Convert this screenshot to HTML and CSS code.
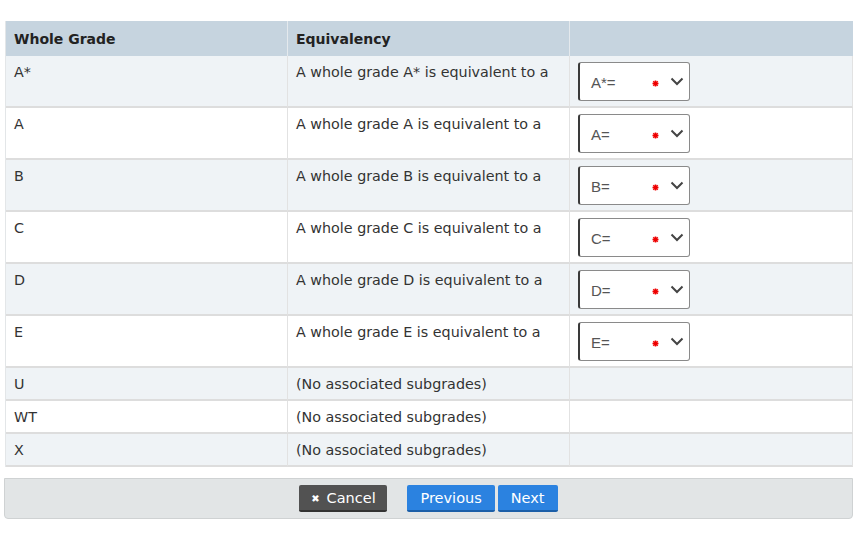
FILE: index.html
```html
<!DOCTYPE html>
<html lang="en">

<head>
    <title>Grade Equivalency</title>
    <link rel="stylesheet" href="styles.css">
</head>

<body>
    <table class="grades">
        <thead>
            <tr>
                <th class="col-grade">Whole Grade</th>
                <th class="col-text">Equivalency</th>
                <th class="col-select"></th>
            </tr>
        </thead>
        <tbody id="grade-rows"></tbody>
    </table>

    <div class="footer">
        <button class="btn btn-cancel"><span class="x-mark">&#10006;</span>Cancel</button>
        <span class="spacer"></span>
        <button class="btn btn-blue">Previous</button>
        <button class="btn btn-blue">Next</button>
    </div>

    <script>
        const grades = ["A*", "A", "B", "C", "D", "E", "U", "WT", "X"];
        const withSubgrades = ["A*", "A", "B", "C", "D", "E"];
        const body = document.getElementById("grade-rows");

        const chevron = '<svg class="chevron" width="14" height="9" viewBox="0 0 14 9"><polyline points="1.5,1.5 7,7 12.5,1.5" fill="none" stroke="#444" stroke-width="2"/></svg>';
        const star = '<svg class="required" width="7" height="7" viewBox="0 0 7 7"><g stroke="#e00" stroke-width="1.6"><line x1="3.5" y1="0.5" x2="3.5" y2="6.5"/><line x1="0.5" y1="3.5" x2="6.5" y2="3.5"/><line x1="1.3" y1="1.3" x2="5.7" y2="5.7"/><line x1="5.7" y1="1.3" x2="1.3" y2="5.7"/></g></svg>';

        grades.forEach((grade) => {
            const row = document.createElement("tr");
            if (withSubgrades.includes(grade)) {
                row.className = "has-select";
                row.innerHTML =
                    `<td>${grade}</td>` +
                    `<td>A whole grade ${grade} is equivalent to a</td>` +
                    `<td class="select-cell"><div class="fake-select"><span class="value">${grade}=</span>${star}${chevron}</div></td>`;
            } else {
                row.innerHTML =
                    `<td>${grade}</td>` +
                    `<td>(No associated subgrades)</td>` +
                    `<td></td>`;
            }
            body.appendChild(row);
        });
    </script>
</body>

</html>
```

FILE: styles.css
```css
body {
    margin: 0;
    padding: 21px 5px 0 5px;
    font-family: "DejaVu Sans", Verdana, sans-serif;
    font-size: 14.3px;
    color: #333;
    background-color: #fff;
}

.grades {
    width: 848px;
    border-collapse: separate;
    border-spacing: 0;
    border-left: 1px solid #e3e6e8;
}

.grades th {
    background-color: #c6d4df;
    color: #222;
    text-align: left;
    font-weight: bold;
    font-size: 14px;
    padding: 9px 8px 7px 8px;
    line-height: 19px;
    border-right: 1px solid #e4e9ed;
}

.grades th:last-child {
    border-right: none;
}

.col-grade {
    width: 265px;
}

.col-text {
    width: 265px;
}

.grades td {
    vertical-align: top;
    padding: 8px 8px 7px 8px;
    line-height: 16px;
    border-bottom: 2px solid #dddddd;
    border-right: 1px solid #e2e2e2;
    color: #333;
}

.grades tbody tr:nth-child(odd) td {
    background-color: #eff3f6;
}

.grades tbody tr:nth-child(even) td {
    background-color: #fff;
}

.grades td.select-cell {
    padding: 6px 8px 5px 8px;
}

.fake-select {
    width: 109px;
    height: 37px;
    border: 1px solid #8a8a8a;
    border-left: 2px solid #3a3a3a;
    border-radius: 3px;
    background-color: #fff;
    display: flex;
    align-items: center;
    font-family: "Liberation Sans", Arial, sans-serif;
    font-size: 15px;
    color: #555;
}

.fake-select .value {
    padding-left: 11px;
    padding-top: 2px;
    flex: 1;
}

.required {
    margin-right: 11px;
    margin-top: 3px;
}

.chevron {
    margin-right: 5px;
}

.footer {
    margin: 11px 0 0 -1px;
    width: 847px;
    height: 39px;
    background-color: #e2e5e6;
    border: 1px solid #cfd2d3;
    border-radius: 0 0 4px 4px;
    display: flex;
    justify-content: center;
    align-items: center;
}

.btn {
    font-family: "DejaVu Sans", Verdana, sans-serif;
    font-size: 14.5px;
    color: #fff;
    border: none;
    border-radius: 2px;
    height: 27px;
    padding: 0 11px;
    margin: 0;
    cursor: pointer;
}

.btn-cancel {
    background-color: #525252;
    border-bottom: 2px solid #333;
    width: 88px;
}

.x-mark {
    font-size: 10px;
    margin-right: 7px;
    position: relative;
    top: -1px;
}

.spacer {
    width: 20px;
}

.btn-blue {
    background-color: #2b82e0;
    border-bottom: 2px solid #1c5fa8;
    margin-right: 3px;
    padding: 0 13px;
}

.btn-blue:last-child {
    margin-right: 0;
}
```
